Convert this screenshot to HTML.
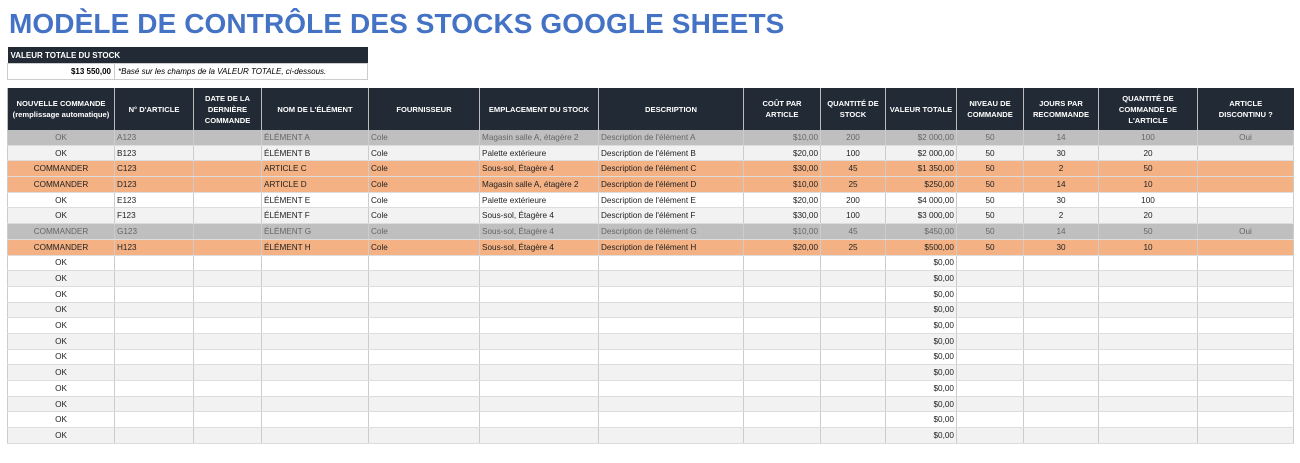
<!DOCTYPE html>
<html><head><meta charset="utf-8"><style>
body{margin:0;width:1300px;height:463px;background:#fff;font-family:"Liberation Sans",sans-serif;overflow:hidden;position:relative}
h1{position:absolute;left:9px;top:8px;margin:0;font-size:28px;font-weight:bold;color:#4472c4;letter-spacing:0.1px;white-space:nowrap}
.tot{position:absolute;left:7px;top:47px;width:361px;border-collapse:collapse;font-size:8px}
.tot td{height:15px;padding:0 3px}
table.m{position:absolute;left:7px;top:88px;border-collapse:collapse;table-layout:fixed;font-size:8.2px;color:#222}
.m th{background:#222b35;color:#fff;font-size:7.6px;font-weight:bold;height:42px;border-left:1px solid #bbb;padding:0 7px;line-height:11px}
.m td{height:14.7px;border:1px solid #ccc;border-top:none;border-bottom:1px solid #ddd;padding:0 2px;white-space:nowrap;overflow:hidden}
.c{text-align:center}.r{text-align:right}
tr.g td{background:#bfbfbf;color:#666}
tr.o td{background:#f4b183}
tr.l td{background:#f2f2f2}
tr.w td{background:#fff}
</style></head><body>
<h1>MODÈLE DE CONTRÔLE DES STOCKS GOOGLE SHEETS</h1>
<table class="tot"><tr><td colspan="2" style="background:#222b35;color:#fff;font-weight:bold;height:16px">VALEUR TOTALE DU STOCK</td></tr>
<tr><td style="width:100px;text-align:right;font-weight:bold;border:1px solid #ccc;border-right:1px solid #ccc">$13 550,00</td><td style="border:1px solid #ccc;font-style:italic">*Basé sur les champs de la VALEUR TOTALE, ci-dessous.</td></tr></table>
<table class="m">
<colgroup><col style="width:107px"><col style="width:79px"><col style="width:68px"><col style="width:107px"><col style="width:111px"><col style="width:119px"><col style="width:145px"><col style="width:77px"><col style="width:65px"><col style="width:71px"><col style="width:67px"><col style="width:75px"><col style="width:99px"><col style="width:96px"></colgroup>
<tr><th style="padding:0 3px">NOUVELLE COMMANDE (remplissage automatique)</th><th>N° D'ARTICLE</th><th style="padding:0 3px">DATE DE LA DERNIÈRE COMMANDE</th><th>NOM DE L'ÉLÉMENT</th><th>FOURNISSEUR</th><th>EMPLACEMENT DU STOCK</th><th>DESCRIPTION</th><th style="padding:0 14px">COÛT PAR ARTICLE</th><th style="padding:0 3px">QUANTITÉ DE STOCK</th><th style="padding:0 2px">VALEUR TOTALE</th><th>NIVEAU DE COMMANDE</th><th style="padding:0 3px">JOURS PAR RECOMMANDE</th><th style="padding:0 14px">QUANTITÉ DE COMMANDE DE L'ARTICLE</th><th style="padding:0 18px">ARTICLE DISCONTINU ?</th></tr>
<tr class="g"><td class="c">OK</td><td>A123</td><td></td><td>ÉLÉMENT A</td><td>Cole</td><td>Magasin salle A, étagère 2</td><td>Description de l'élément A</td><td class="r">$10,00</td><td class="c">200</td><td class="r">$2 000,00</td><td class="c">50</td><td class="c">14</td><td class="c">100</td><td class="c">Oui</td></tr>
<tr class="l"><td class="c">OK</td><td>B123</td><td></td><td>ÉLÉMENT B</td><td>Cole</td><td>Palette extérieure</td><td>Description de l'élément B</td><td class="r">$20,00</td><td class="c">100</td><td class="r">$2 000,00</td><td class="c">50</td><td class="c">30</td><td class="c">20</td><td></td></tr>
<tr class="o"><td class="c">COMMANDER</td><td>C123</td><td></td><td>ARTICLE C</td><td>Cole</td><td>Sous-sol, Étagère 4</td><td>Description de l'élément C</td><td class="r">$30,00</td><td class="c">45</td><td class="r">$1 350,00</td><td class="c">50</td><td class="c">2</td><td class="c">50</td><td></td></tr>
<tr class="o"><td class="c">COMMANDER</td><td>D123</td><td></td><td>ARTICLE D</td><td>Cole</td><td>Magasin salle A, étagère 2</td><td>Description de l'élément D</td><td class="r">$10,00</td><td class="c">25</td><td class="r">$250,00</td><td class="c">50</td><td class="c">14</td><td class="c">10</td><td></td></tr>
<tr class="w"><td class="c">OK</td><td>E123</td><td></td><td>ÉLÉMENT E</td><td>Cole</td><td>Palette extérieure</td><td>Description de l'élément E</td><td class="r">$20,00</td><td class="c">200</td><td class="r">$4 000,00</td><td class="c">50</td><td class="c">30</td><td class="c">100</td><td></td></tr>
<tr class="l"><td class="c">OK</td><td>F123</td><td></td><td>ÉLÉMENT F</td><td>Cole</td><td>Sous-sol, Étagère 4</td><td>Description de l'élément F</td><td class="r">$30,00</td><td class="c">100</td><td class="r">$3 000,00</td><td class="c">50</td><td class="c">2</td><td class="c">20</td><td></td></tr>
<tr class="g"><td class="c">COMMANDER</td><td>G123</td><td></td><td>ÉLÉMENT G</td><td>Cole</td><td>Sous-sol, Étagère 4</td><td>Description de l'élément G</td><td class="r">$10,00</td><td class="c">45</td><td class="r">$450,00</td><td class="c">50</td><td class="c">14</td><td class="c">50</td><td class="c">Oui</td></tr>
<tr class="o"><td class="c">COMMANDER</td><td>H123</td><td></td><td>ÉLÉMENT H</td><td>Cole</td><td>Sous-sol, Étagère 4</td><td>Description de l'élément H</td><td class="r">$20,00</td><td class="c">25</td><td class="r">$500,00</td><td class="c">50</td><td class="c">30</td><td class="c">10</td><td></td></tr>
<tr class="w"><td class="c">OK</td><td></td><td></td><td></td><td></td><td></td><td></td><td></td><td></td><td class="r">$0,00</td><td></td><td></td><td></td><td></td></tr>
<tr class="l"><td class="c">OK</td><td></td><td></td><td></td><td></td><td></td><td></td><td></td><td></td><td class="r">$0,00</td><td></td><td></td><td></td><td></td></tr>
<tr class="w"><td class="c">OK</td><td></td><td></td><td></td><td></td><td></td><td></td><td></td><td></td><td class="r">$0,00</td><td></td><td></td><td></td><td></td></tr>
<tr class="l"><td class="c">OK</td><td></td><td></td><td></td><td></td><td></td><td></td><td></td><td></td><td class="r">$0,00</td><td></td><td></td><td></td><td></td></tr>
<tr class="w"><td class="c">OK</td><td></td><td></td><td></td><td></td><td></td><td></td><td></td><td></td><td class="r">$0,00</td><td></td><td></td><td></td><td></td></tr>
<tr class="l"><td class="c">OK</td><td></td><td></td><td></td><td></td><td></td><td></td><td></td><td></td><td class="r">$0,00</td><td></td><td></td><td></td><td></td></tr>
<tr class="w"><td class="c">OK</td><td></td><td></td><td></td><td></td><td></td><td></td><td></td><td></td><td class="r">$0,00</td><td></td><td></td><td></td><td></td></tr>
<tr class="l"><td class="c">OK</td><td></td><td></td><td></td><td></td><td></td><td></td><td></td><td></td><td class="r">$0,00</td><td></td><td></td><td></td><td></td></tr>
<tr class="w"><td class="c">OK</td><td></td><td></td><td></td><td></td><td></td><td></td><td></td><td></td><td class="r">$0,00</td><td></td><td></td><td></td><td></td></tr>
<tr class="l"><td class="c">OK</td><td></td><td></td><td></td><td></td><td></td><td></td><td></td><td></td><td class="r">$0,00</td><td></td><td></td><td></td><td></td></tr>
<tr class="w"><td class="c">OK</td><td></td><td></td><td></td><td></td><td></td><td></td><td></td><td></td><td class="r">$0,00</td><td></td><td></td><td></td><td></td></tr>
<tr class="l"><td class="c">OK</td><td></td><td></td><td></td><td></td><td></td><td></td><td></td><td></td><td class="r">$0,00</td><td></td><td></td><td></td><td></td></tr>
</table>
</body></html>
